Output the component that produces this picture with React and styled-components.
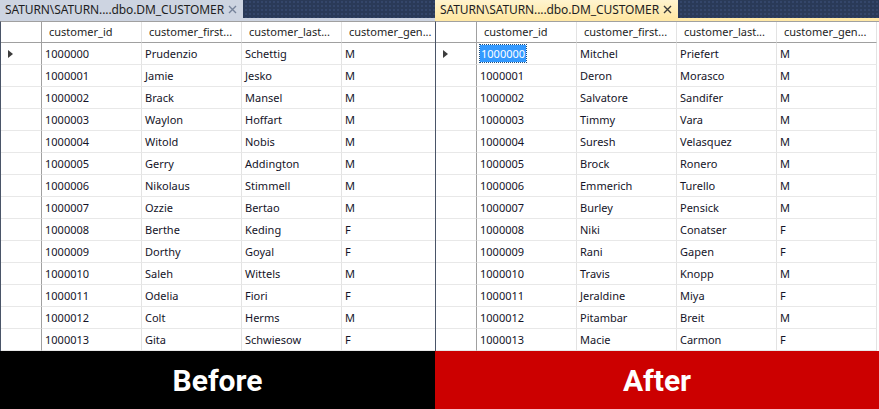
import React from 'react'
import styled, { createGlobalStyle } from 'styled-components'

const GlobalStyle = createGlobalStyle`
  html, body {
    margin: 0;
    padding: 0;
    background: #fff;
  }
  body {
    font-family: "Noto Sans", "Liberation Sans", sans-serif;
  }
`

const before = [
  ['1000000', 'Prudenzio', 'Schettig', 'M'],
  ['1000001', 'Jamie', 'Jesko', 'M'],
  ['1000002', 'Brack', 'Mansel', 'M'],
  ['1000003', 'Waylon', 'Hoffart', 'M'],
  ['1000004', 'Witold', 'Nobis', 'M'],
  ['1000005', 'Gerry', 'Addington', 'M'],
  ['1000006', 'Nikolaus', 'Stimmell', 'M'],
  ['1000007', 'Ozzie', 'Bertao', 'M'],
  ['1000008', 'Berthe', 'Keding', 'F'],
  ['1000009', 'Dorthy', 'Goyal', 'F'],
  ['1000010', 'Saleh', 'Wittels', 'M'],
  ['1000011', 'Odelia', 'Fiori', 'F'],
  ['1000012', 'Colt', 'Herms', 'M'],
  ['1000013', 'Gita', 'Schwiesow', 'F'],
]

const after = [
  ['1000000', 'Mitchel', 'Priefert', 'M'],
  ['1000001', 'Deron', 'Morasco', 'M'],
  ['1000002', 'Salvatore', 'Sandifer', 'M'],
  ['1000003', 'Timmy', 'Vara', 'M'],
  ['1000004', 'Suresh', 'Velasquez', 'M'],
  ['1000005', 'Brock', 'Ronero', 'M'],
  ['1000006', 'Emmerich', 'Turello', 'M'],
  ['1000007', 'Burley', 'Pensick', 'M'],
  ['1000008', 'Niki', 'Conatser', 'F'],
  ['1000009', 'Rani', 'Gapen', 'F'],
  ['1000010', 'Travis', 'Knopp', 'M'],
  ['1000011', 'Jeraldine', 'Miya', 'F'],
  ['1000012', 'Pitambar', 'Breit', 'M'],
  ['1000013', 'Macie', 'Carmon', 'F'],
]

const headers = ['customer_id', 'customer_first...', 'customer_last...', 'customer_gen...']

const CloseIcon = ({ color }) => (
  <svg width="9" height="9" viewBox="0 0 9 9">
    <path d="M1 1 L8 8 M8 1 L1 8" stroke={color} strokeWidth="1.4" fill="none" />
  </svg>
)

const Panel = ({ data, active, selected }) => (
  <PanelWrap $width={active ? 444 : 435}>
    <TabStrip>
      <Tab $active={active}>
        <span>SATURN\SATURN....dbo.DM_CUSTOMER</span>
        <CloseIcon color={active ? '#3a3a3a' : '#76839a'} />
      </Tab>
    </TabStrip>
    <Stripe $active={active} />
    <Grid>
      <HeaderCell $rowHead />
      {headers.map(h => <HeaderCell key={h}>{h}</HeaderCell>)}
      {data.map((row, i) => (
        <React.Fragment key={row[0]}>
          <RowHead>{i === 0 && <Arrow />}</RowHead>
          {row.map((c, j) => (
            <Cell key={j}>
              {selected && i === 0 && j === 0 ? <Selected>{c}</Selected> : c}
            </Cell>
          ))}
        </React.Fragment>
      ))}
    </Grid>
  </PanelWrap>
)

const App = () => {
  return (
    <Page>
      <GlobalStyle />
      <Panels>
        <Panel data={before} />
        <Panel data={after} active selected />
      </Panels>
      <Bands>
        <Band $color="#000000" $width={435}>Before</Band>
        <Band $color="#cc0000" $width={444}>After</Band>
      </Bands>
    </Page>
  )
}

const Page = styled.div`
  width: 879px;
  height: 409px;
  overflow: hidden;
  display: flex;
  flex-direction: column;
`

const Panels = styled.div`
  display: flex;
  height: 351px;
`

const PanelWrap = styled.div`
  width: ${p => p.$width}px;
  flex: none;
  display: flex;
  flex-direction: column;
  overflow: hidden;
  background: #f0f0f0;
`

const TabStrip = styled.div`
  height: 18px;
  flex: none;
  display: flex;
  background-color: #2a3a58;
  background-image: radial-gradient(circle, #34466a 0.8px, transparent 1px);
  background-size: 4px 4px;
`

const Tab = styled.div`
  width: 243px;
  display: flex;
  align-items: center;
  justify-content: space-between;
  padding: 0 6px 0 5px;
  box-sizing: border-box;
  font-size: 12px;
  color: #1e1e1e;
  white-space: nowrap;
  background: ${p => (p.$active ? 'linear-gradient(#fff4cf, #ffe8a6)' : '#cdd4e1')};
  span {
    letter-spacing: -0.1px;
  }
`

const Stripe = styled.div`
  height: 3px;
  flex: none;
  background: ${p => (p.$active ? '#ffe8a6' : '#cdd4e1')};
`

const Grid = styled.div`
  flex: 1;
  display: grid;
  grid-template-columns: 41px 100px 100px 100px 100px;
  grid-auto-rows: 22px;
  grid-template-rows: 21px;
  align-content: start;
  border-top: 1px solid #a0a0a0;
  border-left: 1px solid #4a5568;
  background: #fff;
  overflow: hidden;
`

const HeaderCell = styled.div`
  box-sizing: border-box;
  border-bottom: 1px solid #a0a0a0;
  border-right: 1px solid ${p => (p.$rowHead ? '#a0a0a0' : '#e3e3e3')};
  padding-left: 7px;
  font-size: 11px;
  line-height: 20px;
  color: #1e1e1e;
  white-space: nowrap;
  overflow: hidden;
`

const RowHead = styled.div`
  box-sizing: border-box;
  border-right: 1px solid #a0a0a0;
  border-bottom: 1px solid #e8e8e8;
  display: flex;
  align-items: center;
  padding-left: 7px;
`

const Arrow = styled.div`
  width: 0;
  height: 0;
  border-left: 5px solid #3c3c3c;
  border-top: 4px solid transparent;
  border-bottom: 4px solid transparent;
`

const Cell = styled.div`
  box-sizing: border-box;
  border-right: 1px solid #e3e3e3;
  border-bottom: 1px solid #e8e8e8;
  padding-left: 3px;
  font-size: 11px;
  line-height: 21px;
  color: #141428;
  white-space: nowrap;
  overflow: hidden;
`

const Selected = styled.span`
  background: #3399ff;
  color: #fff;
  padding: 1px 1px;
  outline: 1px dotted #1a4d80;
`

const Bands = styled.div`
  display: flex;
  height: 58px;
`

const Band = styled.div`
  width: ${p => p.$width}px;
  flex: none;
  background: ${p => p.$color};
  color: #fff;
  display: flex;
  align-items: center;
  justify-content: center;
  font-family: Roboto, "Liberation Sans", sans-serif;
  font-weight: 700;
  font-size: 30px;
`

export default App
